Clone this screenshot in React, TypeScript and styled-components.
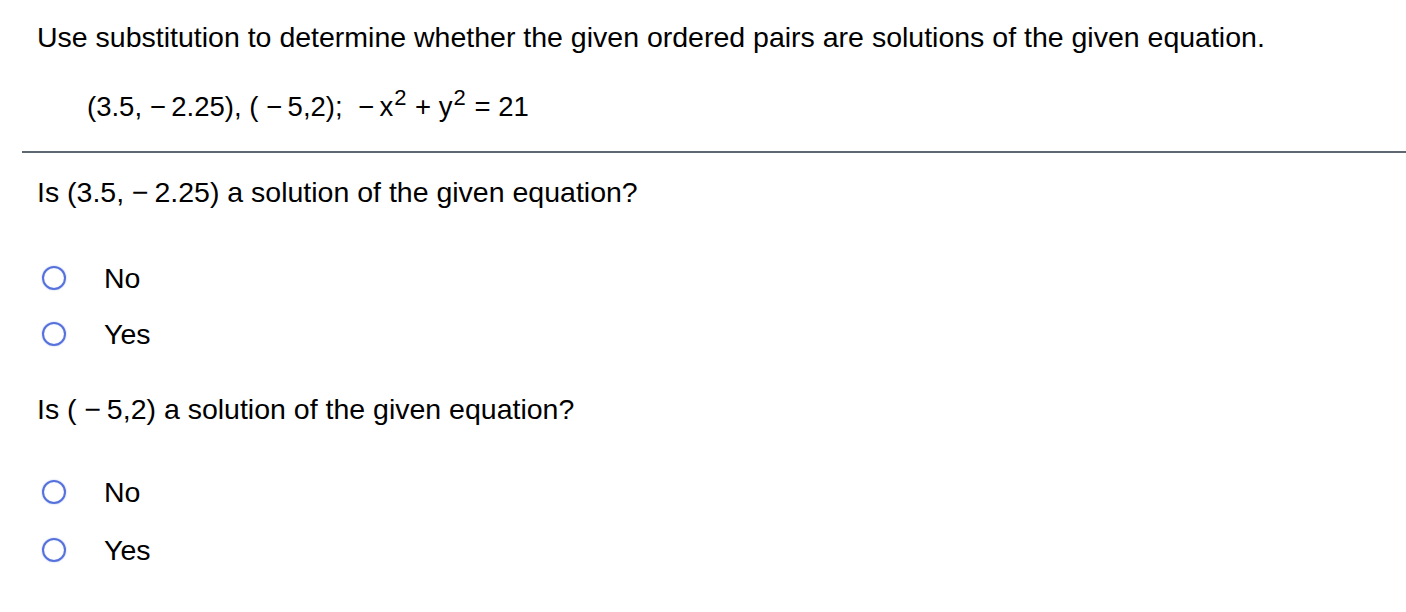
import React, {FC} from 'react';
import styled, {createGlobalStyle} from "styled-components";

const GlobalStyle = createGlobalStyle`
  body {
    margin: 0;
    background: #ffffff;
    font-family: "Liberation Sans", Arial, sans-serif;
    color: #000000;
  }
`

type OptionType = {
  label: string
  gap: number
}

const Option: FC<OptionType> = ({label, gap}) => (
  <OptionRow $gap={gap}>
    <Radio/>
    <OptionLabel>{label}</OptionLabel>
  </OptionRow>
)

const App: FC = () => {
  return (
    <Page>
      <GlobalStyle/>
      <Header>
        <Title>Use substitution to determine whether the given ordered pairs are solutions of the given equation.</Title>
        <Equation>
          (3.5, −{'\u2009'}2.25), ( −{'\u2009'}5,2);&nbsp; −{'\u2009'}x<Sup>2</Sup> + y<Sup>2</Sup> = 21
        </Equation>
      </Header>

      <Divider/>

      <Question $gap={24}>Is (3.5, −{'\u2009'}2.25) a solution of the given equation?</Question>
      <Option label="No" gap={56}/>
      <Option label="Yes" gap={26}/>

      <Question $gap={45}>Is ( −{'\u2009'}5,2) a solution of the given equation?</Question>
      <Option label="No" gap={53}/>
      <Option label="Yes" gap={28}/>
    </Page>
  );
};

export default App;

const Page = styled.div`
  width: 1406px;
  height: 612px;
  padding-top: 22px;
  box-sizing: border-box;
  overflow: hidden;
`

const Header = styled.div`
  padding-left: 37px;
`

const Title = styled.div`
  font-size: 28.5px;
  line-height: 30px;
  white-space: nowrap;
`

const Equation = styled.div`
  margin-top: 40px;
  padding-left: 50px;
  font-size: 27.5px;
  line-height: 30px;
  white-space: nowrap;
`

const Sup = styled.sup`
  font-size: 22px;
  line-height: 0;
  vertical-align: 11px;
  padding: 0 1px;
`

const Divider = styled.div`
  margin: 29px 0 0 22px;
  height: 2px;
  background: #5e6873;
`

const Question = styled.div<{ $gap: number }>`
  margin-top: ${p => p.$gap}px;
  padding-left: 37px;
  font-size: 28.5px;
  line-height: 30px;
  white-space: nowrap;
`

const OptionRow = styled.div<{ $gap: number }>`
  margin-top: ${p => p.$gap}px;
  padding-left: 42px;
  height: 30px;
  display: flex;
  align-items: center;
  column-gap: 38px;
`

const Radio = styled.span`
  width: 20px;
  height: 20px;
  border: 2px solid #5471dc;
  border-radius: 50%;
  box-shadow: 0 0 1.5px rgba(84, 113, 220, 0.6), inset 0 0 1px rgba(84, 113, 220, 0.4);
  flex-shrink: 0;
`

const OptionLabel = styled.span`
  font-size: 28.5px;
  line-height: 30px;
`
